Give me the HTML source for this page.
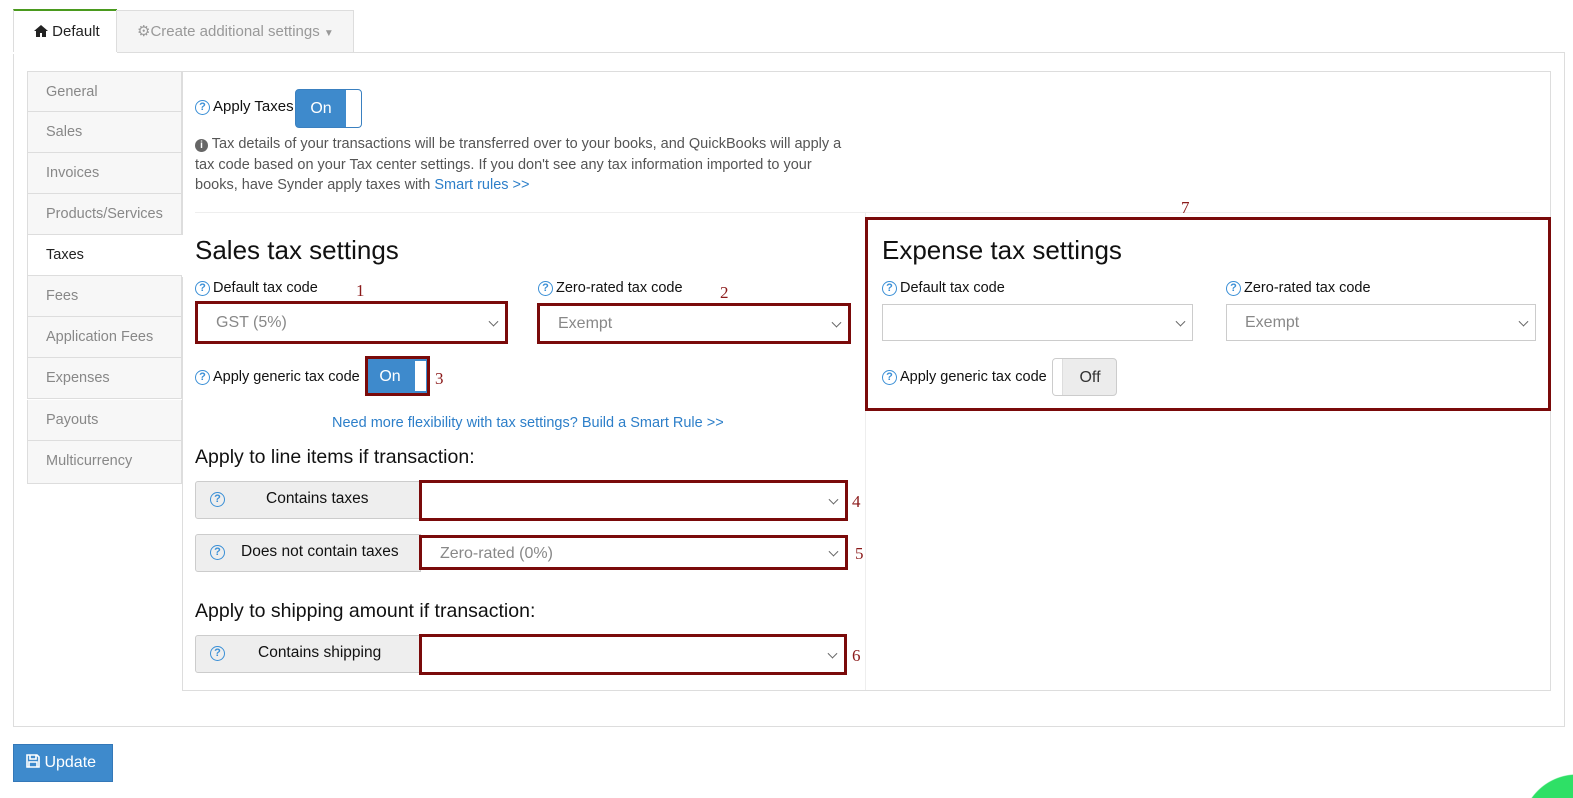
<!DOCTYPE html>
<html style="width:1573px;height:798px;overflow:hidden"><head><meta charset="utf-8"><style>
*{box-sizing:border-box;margin:0;padding:0}
body{width:1573px;height:798px;background:#fff;font-family:"Liberation Sans",Arial,sans-serif;color:#222;position:relative;overflow:hidden;font-size:14.5px}
.a{position:absolute}
.q{display:inline-block;width:15px;height:15px;border:1.5px solid #3a8fd6;border-radius:50%;color:#3a8fd6;font-size:11px;line-height:12px;text-align:center;font-weight:bold;vertical-align:1px;margin-right:3px}
.nav{position:absolute;left:27px;width:155px;height:41px;border:1px solid #ddd;border-top:none;background:#f7f7f7;color:#888;padding-left:18px;line-height:40px;font-size:14.5px}
.sel{border:1px solid #ccc;background:#fff;color:#888;font-size:16px;padding-left:18px}
.chev{position:absolute;right:8px;top:50%;width:7px;height:7px;border-right:1.5px solid #666;border-bottom:1.5px solid #666;transform:translateY(-70%) rotate(45deg)}
.red{border:3px solid #7a0a0a}
.num{color:#8b1a1a;font-family:"Liberation Serif",serif;font-size:17px}
.grp{border:1px solid #ccc;background:#eee;border-radius:3px 0 0 3px;font-size:15.5px;color:#111}
</style></head><body>
<div class="a" style="left:13px;top:9px;width:104px;height:44px;border-top:2px solid #4a9a1e;border-left:1px solid #ddd;background:#fff;font-size:15px;line-height:42px;padding-left:20px;color:#222"><svg width="14" height="12" viewBox="0 0 14 12" style="vertical-align:-1px"><path d="M7 0L0 6h2v6h4V8h2v4h4V6h2z" fill="#222"/></svg> Default</div>
<div class="a" style="left:116px;top:10px;width:238px;height:43px;border:1px solid #ddd;border-bottom:none;background:#f5f5f5;color:#999;font-size:15px;line-height:42px;padding-left:20px">⚙Create additional settings <span style="font-size:10px">▼</span></div>
<div class="a" style="left:13px;top:52px;width:1552px;height:675px;border:1px solid #ddd"></div>
<div class="a" style="left:13px;top:52px;width:104px;height:2px;background:#fff"></div>
<div class="nav" style="top:71px;border-top:1px solid #ddd">General</div>
<div class="nav" style="top:112px">Sales</div>
<div class="nav" style="top:153px">Invoices</div>
<div class="nav" style="top:194px">Products/Services</div>
<div class="nav" style="top:235px;background:#fff;color:#222;border-right:none;width:156px">Taxes</div>
<div class="nav" style="top:276px">Fees</div>
<div class="nav" style="top:317px">Application Fees</div>
<div class="nav" style="top:358px">Expenses</div>
<div class="nav" style="top:400px">Payouts</div>
<div class="nav" style="top:441px;height:43px">Multicurrency</div>
<div class="a" style="left:182px;top:71px;width:1369px;height:620px;border:1px solid #ddd"></div>
<div class="a" style="left:182px;top:235px;width:1px;height:42px;background:#fff"></div>
<div class="a" style="left:195px;top:98px;font-size:15px;color:#111"><span class="q">?</span>Apply Taxes</div>
<div class="a" style="left:295px;top:89px;width:67px;height:39px;border:1px solid #3a80c0;border-radius:4px;background:#3e8acc;overflow:hidden"><div class="a" style="left:0;top:0;width:50px;height:37px;color:#fff;font-size:16px;line-height:37px;text-align:center">On</div><div class="a" style="left:50px;top:0;width:16px;height:37px;background:#fff;border-radius:0 3px 3px 0"></div></div>
<div class="a" style="left:195px;top:134px;width:660px;font-size:14.5px;line-height:20.5px;color:#555"><span style="display:inline-block;width:13px;height:13px;border-radius:50%;background:#666;color:#fff;font-size:10px;line-height:13px;text-align:center;font-weight:bold;vertical-align:0">i</span> Tax details of your transactions will be transferred over to your books, and QuickBooks will apply a tax code based on your Tax center settings. If you don't see any tax information imported to your books, have Synder apply taxes with <span style="color:#2d7fc9">Smart rules &gt;&gt;</span></div>
<div class="a" style="left:195px;top:212px;width:1345px;height:1px;background:#eee"></div>
<div class="a" style="left:865px;top:212px;width:1px;height:478px;background:#eee"></div>
<div class="a" style="left:195px;top:235px;font-size:26px;color:#111">Sales tax settings</div>
<div class="a" style="left:195px;top:280px;font-size:14.5px;color:#111"><span class="q">?</span>Default tax code</div>
<div class="a num" style="left:356px;top:281px">1</div>
<div class="a" style="left:538px;top:280px;font-size:14.5px;color:#111"><span class="q">?</span>Zero-rated tax code</div>
<div class="a num" style="left:720px;top:283px">2</div>
<div class="a sel red" style="left:195px;top:301px;width:313px;height:43px;line-height:37px">GST (5%)<i class="chev"></i></div>
<div class="a sel red" style="left:537px;top:303px;width:314px;height:41px;line-height:35px">Exempt<i class="chev"></i></div>
<div class="a" style="left:195px;top:369px;font-size:14.5px;color:#111"><span class="q">?</span>Apply generic tax code</div>
<div class="a red" style="left:365px;top:356px;width:65px;height:40px;background:#3e8acc;overflow:hidden"><div class="a" style="left:0;top:0;width:44px;height:34px;color:#fff;font-size:16px;line-height:36px;text-align:center">On</div><div class="a" style="left:47px;top:2px;width:11px;height:30px;background:#fff"></div></div>
<div class="a num" style="left:435px;top:369px">3</div>
<div class="a" style="left:332px;top:415px;font-size:14.5px;color:#2d7fc9">Need more flexibility with tax settings? Build a Smart Rule &gt;&gt;</div>
<div class="a" style="left:195px;top:446px;font-size:19.5px;color:#111">Apply to line items if transaction:</div>
<div class="a grp" style="left:195px;top:481px;width:226px;height:38px;line-height:34px"><span class="q" style="margin-left:14px">?</span><span style="margin-left:38px">Contains taxes</span></div>
<div class="a sel red" style="left:419px;top:480px;width:429px;height:41px"><i class="chev"></i></div>
<div class="a num" style="left:852px;top:492px">4</div>
<div class="a grp" style="left:195px;top:534px;width:226px;height:38px;line-height:34px"><span class="q" style="margin-left:14px">?</span><span style="margin-left:13px">Does not contain taxes</span></div>
<div class="a sel red" style="left:419px;top:535px;width:429px;height:35px;line-height:32px">Zero-rated (0%)<i class="chev"></i></div>
<div class="a num" style="left:855px;top:544px">5</div>
<div class="a" style="left:195px;top:600px;font-size:19.5px;color:#111">Apply to shipping amount if transaction:</div>
<div class="a grp" style="left:195px;top:635px;width:226px;height:38px;line-height:34px"><span class="q" style="margin-left:14px">?</span><span style="margin-left:30px">Contains shipping</span></div>
<div class="a sel red" style="left:419px;top:634px;width:428px;height:41px"><i class="chev"></i></div>
<div class="a num" style="left:852px;top:646px">6</div>
<div class="a num" style="left:1181px;top:198px">7</div>
<div class="a red" style="left:865px;top:217px;width:686px;height:194px"></div>
<div class="a" style="left:882px;top:235px;font-size:26px;color:#111">Expense tax settings</div>
<div class="a" style="left:882px;top:280px;font-size:14.5px;color:#111"><span class="q">?</span>Default tax code</div>
<div class="a" style="left:1226px;top:280px;font-size:14.5px;color:#111"><span class="q">?</span>Zero-rated tax code</div>
<div class="a sel" style="left:882px;top:304px;width:311px;height:37px"><i class="chev"></i></div>
<div class="a sel" style="left:1226px;top:304px;width:310px;height:37px;line-height:35px">Exempt<i class="chev"></i></div>
<div class="a" style="left:882px;top:369px;font-size:14.5px;color:#111"><span class="q">?</span>Apply generic tax code</div>
<div class="a" style="left:1052px;top:358px;width:65px;height:38px;border:1px solid #ccc;border-radius:4px;background:#ececec;overflow:hidden"><div class="a" style="left:0;top:0;width:10px;height:36px;background:#fff;border-right:1px solid #ddd"></div><div class="a" style="left:10px;top:0;width:54px;height:36px;line-height:37px;text-align:center;font-size:16px;color:#333">Off</div></div>
<div class="a" style="left:13px;top:744px;width:100px;height:38px;background:#3e8acc;border:1px solid #3478b8;color:#fff;font-size:16px;line-height:36px;padding-left:12px"><svg width="14" height="14" viewBox="0 0 14 14" style="vertical-align:-1px"><path d="M1 1h10l2 2v10H1z M4 1v4h6V1 M3 8h8v5H3z" fill="none" stroke="#fff" stroke-width="1.6"/></svg> Update</div>
<div class="a" style="left:1510px;top:768px;width:63px;height:30px;background:radial-gradient(circle at 67px 62px,#2ee066 55px,transparent 56px)"></div>
</body></html>
